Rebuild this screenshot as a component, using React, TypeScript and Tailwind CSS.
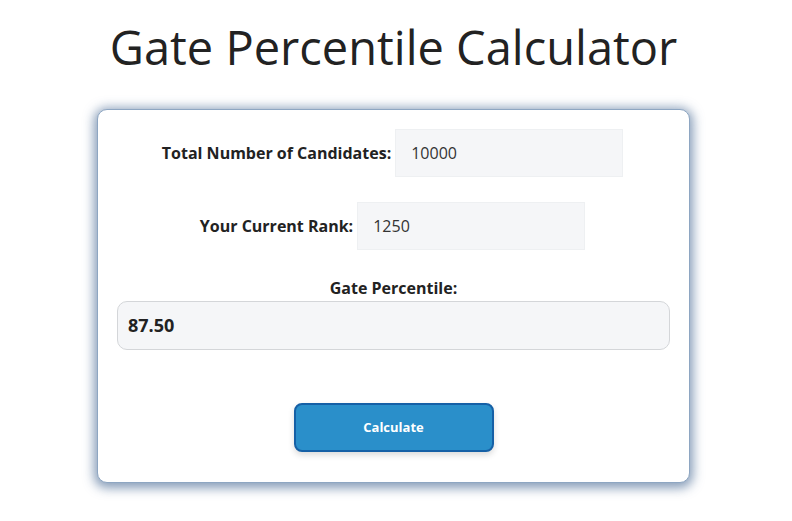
import React from "react";

export default function App() {
  return (
    <div
      className="w-[787px] h-[521px] bg-white flex flex-col items-center overflow-hidden"
      style={{ fontFamily: '"Open Sans", "Noto Sans", sans-serif' }}
    >
      <h1 className="mt-[14px] text-[47px] leading-[66px] font-normal text-[#222]">
        Gate Percentile Calculator
      </h1>
      <div className="mt-[29px] w-[593px] bg-white rounded-[10px] border border-[#8ea6c2] shadow-[0_2px_11px_3px_rgba(60,95,140,0.62)] px-[19px] pt-[19px] pb-[30px] flex flex-col items-center">
        <div className="flex items-center gap-[4px] -translate-x-[1px]">
          <label className="text-[16px] font-bold text-[#222]">Total Number of Candidates:</label>
          <div className="w-[228px] h-[48px] bg-[#f5f6f8] border border-[#eef0f2] flex items-center px-[15px] text-[16px] text-[#333]">
            10000
          </div>
        </div>
        <div className="mt-[25px] flex items-center gap-[4px] -translate-x-[1px]">
          <label className="text-[16px] font-bold text-[#222]">Your Current Rank:</label>
          <div className="w-[228px] h-[48px] bg-[#f5f6f8] border border-[#eef0f2] flex items-center px-[15px] text-[16px] text-[#333]">
            1250
          </div>
        </div>
        <div className="mt-[26px] text-[16px] font-bold text-[#222] leading-[24px]">Gate Percentile:</div>
        <div className="mt-[1px] w-full h-[49px] bg-[#f5f6f8] border border-[#d4d6d9] rounded-[10px] flex items-center px-[10px] text-[18px] font-bold text-[#222]">
          87.50
        </div>
        <button className="mt-[53px] w-[200px] h-[49px] bg-[#2a8fca] border-2 border-[#1560a6] rounded-[8px] text-white text-[13px] font-bold shadow-[0_3px_6px_rgba(0,0,0,0.15)]">
          Calculate
        </button>
      </div>
    </div>
  );
}
